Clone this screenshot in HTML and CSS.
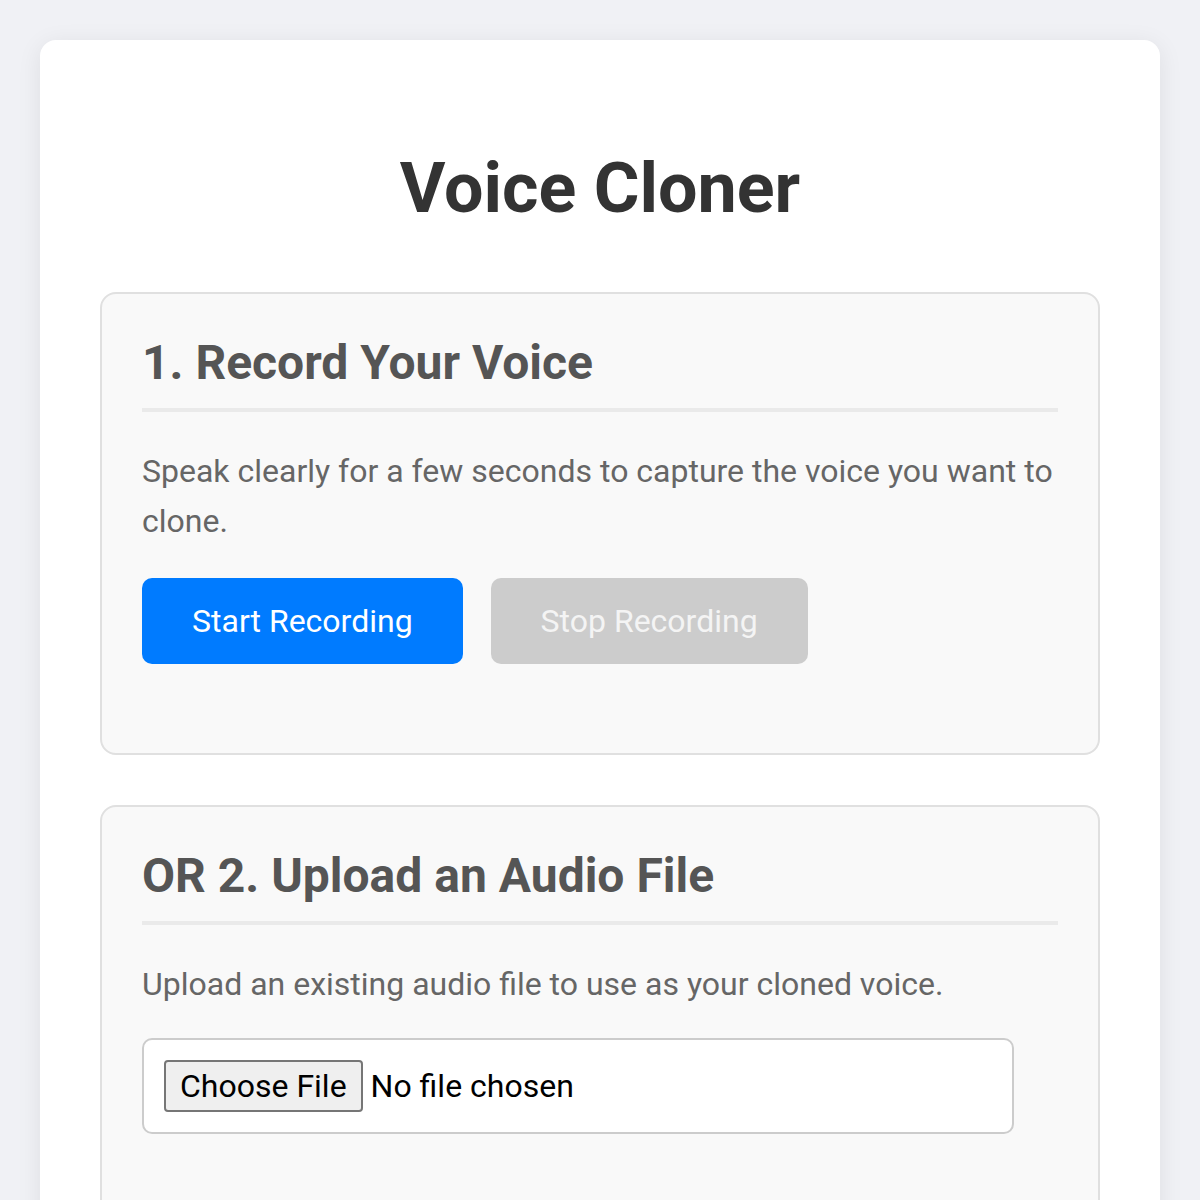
FILE: index.html
```html
<!DOCTYPE html>
<html lang="en">
<head>
  <meta charset="UTF-8" />
  <meta name="viewport" content="width=device-width, initial-scale=1.0" />
  <title>Voice Cloner</title>
  <link rel="stylesheet" href="styles.css">
</head>
<body>
  <div class="container">
    <h1>Voice Cloner</h1>

    <div class="section">
      <h2>1. Record Your Voice</h2>
      <p>Speak clearly for a few seconds to capture the voice you want to clone.</p>
      <div class="controls">
        <button class="btn btn-start" id="startBtn">Start Recording</button>
        <button class="btn btn-stop" id="stopBtn" disabled>Stop Recording</button>
      </div>
    </div>

    <div class="section">
      <h2>OR 2. Upload an Audio File</h2>
      <p class="upload-text">Upload an existing audio file to use as your cloned voice.</p>
      <input type="file" id="audioFile" class="file-input" accept="audio/*">
    </div>
  </div>
</body>
</html>
```

FILE: styles.css
```css
body {
  font-family: Roboto, "Liberation Sans", sans-serif;
  background: #f0f1f5;
  margin: 0;
  padding: 40px;
}

.container {
  background: white;
  border-radius: 16px;
  box-shadow: 0 4px 24px rgba(0,0,0,0.08);
  padding: 60px;
}

h1 {
  text-align: center;
  color: #333;
  font-size: 70px;
  font-weight: 700;
  margin: 47px 0 63px;
}

.section {
  background: #f9f9f9;
  border: 2px solid #e0e0e0;
  border-radius: 16px;
  padding: 40px;
  margin-bottom: 50px;
}

h2 {
  color: #555;
  font-size: 48px;
  font-weight: 700;
  margin: 0 0 35px;
  padding-bottom: 17px;
  border-bottom: 4px solid #eaeaea;
}

p {
  color: #666;
  font-size: 32px;
  line-height: 1.55;
  margin: 0 0 32px;
}

.upload-text {
  margin-bottom: 28px;
}

.controls {
  display: flex;
  gap: 28px;
  margin-bottom: 49px;
}

.btn {
  font-family: inherit;
  font-size: 32px;
  color: white;
  border: none;
  border-radius: 10px;
  padding: 24px 50px;
  cursor: pointer;
}

.btn-start {
  background: #007bff;
}

.btn-stop {
  background: #cccccc;
  color: #f4f4f4;
  cursor: not-allowed;
}

.file-input {
  display: block;
  box-sizing: border-box;
  width: 872px;
  margin-bottom: 49px;
  background: white;
  border: 2px solid #ccc;
  border-radius: 10px;
  padding: 20px;
  font-family: inherit;
  font-size: 32px;
  color: #000;
}

.file-input::file-selector-button {
  font-family: inherit;
  font-size: 32px;
  color: #000;
  background: #efefef;
  border: 2px solid #767676;
  border-radius: 4px;
  padding: 5px 14px;
  margin-right: 8px;
}
```
